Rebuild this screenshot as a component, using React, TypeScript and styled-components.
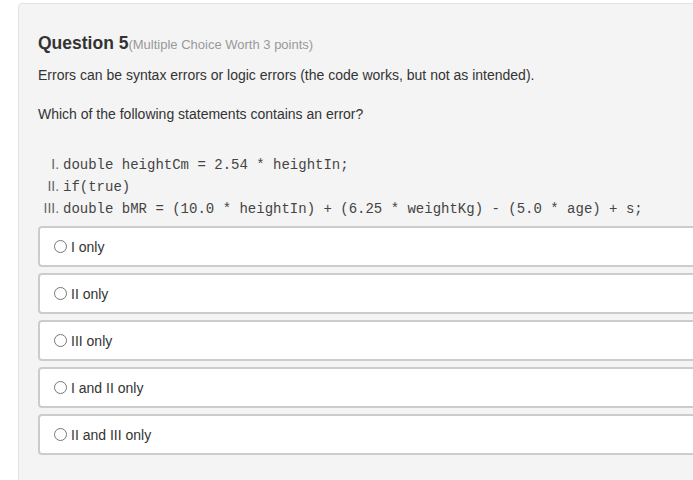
import styled, { createGlobalStyle } from 'styled-components'

const GlobalStyle = createGlobalStyle`
    html, body {
        margin: 0;
        padding: 0;
        background: #fff;
    }
    body {
        font-family: "Liberation Sans", Arial, sans-serif;
        color: #333;
    }
`

const Page = styled.div`
    width: 693px;
    height: 480px;
    overflow: hidden;
    box-sizing: border-box;
    padding: 3px 0 0 18px;
`

const Panel = styled.div`
    width: 720px;
    min-height: 490px;
    box-sizing: border-box;
    background: #f4f4f4;
    border: 1px solid #e3e3e3;
    border-radius: 4px;
    padding: 29px 19px 20px 19px;
`

const Title = styled.h2`
    margin: 0;
    font-size: 17.5px;
    line-height: 20px;
    font-weight: bold;
    color: #333;
`

const Worth = styled.span`
    font-size: 13px;
    font-weight: normal;
    color: #999;
`

const Prompt = styled.p`
    margin: 0;
    font-size: 14px;
    line-height: 20px;
    padding-top: ${(p: { $gap: number }) => p.$gap}px;
`

const Statements = styled.ol`
    list-style: upper-roman;
    margin: 0;
    padding: 29px 0 0 25px;
    font-size: 14px;
    color: #666;
`

const Statement = styled.li`
    height: 22px;
    line-height: 22px;
`

const Code = styled.code`
    font-family: "Liberation Mono", "Courier New", monospace;
    font-size: 14px;
    line-height: 22px;
    color: #444;
    white-space: pre;
`

const Options = styled.div`
    display: flex;
    flex-direction: column;
    gap: 6px;
    padding-top: 7px;
`

const Option = styled.label`
    display: flex;
    align-items: center;
    height: 41px;
    box-sizing: border-box;
    background: #fff;
    border: 2px solid #cccccc;
    border-radius: 4px;
    padding-left: 14px;
    font-size: 14px;
    color: #333;
    cursor: pointer;
`

const Radio = styled.span`
    width: 11px;
    height: 11px;
    border: 1px solid #767676;
    border-radius: 50%;
    background: #fff;
    margin-right: 4px;
    flex-shrink: 0;
`

const statements = [
    'double heightCm = 2.54 * heightIn;',
    'if(true)',
    'double bMR = (10.0 * heightIn) + (6.25 * weightKg) - (5.0 * age) + s;',
]

const choices = ['I only', 'II only', 'III only', 'I and II only', 'II and III only']

export default function App() {
    return (
        <>
            <GlobalStyle />
            <Page>
                <Panel>
                    <Title>
                        Question 5<Worth>(Multiple Choice Worth 3 points)</Worth>
                    </Title>
                    <Prompt $gap={10}>
                        Errors can be syntax errors or logic errors (the code works, but not as intended).
                    </Prompt>
                    <Prompt $gap={19}>Which of the following statements contains an error?</Prompt>
                    <Statements>
                        {statements.map((s) => (
                            <Statement key={s}>
                                <Code>{s}</Code>
                            </Statement>
                        ))}
                    </Statements>
                    <Options>
                        {choices.map((c) => (
                            <Option key={c}>
                                <Radio />
                                {c}
                            </Option>
                        ))}
                    </Options>
                </Panel>
            </Page>
        </>
    )
}
